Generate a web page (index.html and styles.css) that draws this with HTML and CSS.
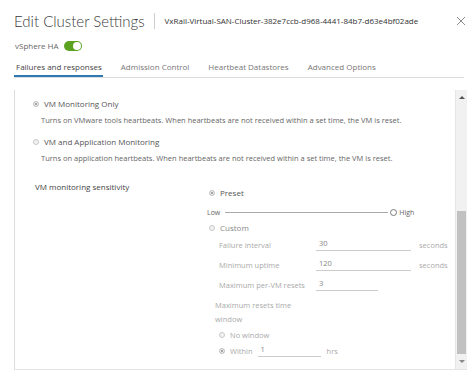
FILE: index.html
```html
<!DOCTYPE html>
<html lang="en">

<head>
  <meta charset="UTF-8">
  <meta name="viewport" content="width=device-width, initial-scale=1.0">
  <title>Edit Cluster Settings</title>
  <link rel="stylesheet" href="styles.css">
</head>

<body>
  <div class="dialog">
    <div class="header">
      <h1 class="title">Edit Cluster Settings</h1>
      <span class="subtitle">VxRail-Virtual-SAN-Cluster-382e7ccb-d968-4441-84b7-d63e4bf02ade</span>
      <span class="close">
        <svg width="10" height="10" viewBox="0 0 10 10">
          <path d="M1 1L9 9M9 1L1 9" stroke="#8a8a8a" stroke-width="1" fill="none" />
        </svg>
      </span>
    </div>

    <div class="ha">
      <span>vSphere HA</span>
      <span class="toggle"><span class="knob"></span></span>
    </div>

    <ul class="tabs">
      <li class="tab active">Failures and responses</li>
      <li class="tab">Admission Control</li>
      <li class="tab">Heartbeat Datastores</li>
      <li class="tab">Advanced Options</li>
    </ul>

    <div class="panel">
      <div class="content">
        <div class="option">
          <div class="radio-row"><span class="radio checked"></span>VM Monitoring Only</div>
          <p class="desc">Turns on VMware tools heartbeats. When heartbeats are not received within a set time, the VM is reset.</p>
        </div>
        <div class="option">
          <div class="radio-row"><span class="radio"></span>VM and Application Monitoring</div>
          <p class="desc">Turns on application heartbeats. When heartbeats are not received within a set time, the VM is reset.</p>
        </div>

        <div class="sensitivity">
          <div class="sens-label">VM monitoring sensitivity</div>
          <div class="sens-body">
            <div class="radio-row preset"><span class="radio checked"></span>Preset</div>
            <div class="slider">
              <span>Low</span>
              <span class="track"></span>
              <span class="thumb"></span>
              <span>High</span>
            </div>
            <div class="radio-row custom"><span class="radio"></span>Custom</div>

            <div class="fields">
              <div class="field">
                <span class="f-label">Failure interval</span>
                <span class="f-input">30</span>
                <span class="f-unit">seconds</span>
              </div>
              <div class="field">
                <span class="f-label">Minimum uptime</span>
                <span class="f-input">120</span>
                <span class="f-unit">seconds</span>
              </div>
              <div class="field">
                <span class="f-label">Maximum per-VM resets</span>
                <span class="f-input short">3</span>
              </div>
            </div>

            <div class="window-label">Maximum resets time<br>window</div>
            <div class="radio-row dim win"><span class="radio"></span>No window</div>
            <div class="radio-row dim win"><span class="radio checked"></span>Within
              <span class="f-input hrs">1</span>
              <span class="f-unit hrs-unit">hrs</span>
            </div>
          </div>
        </div>
      </div>

      <div class="scrollbar">
        <span class="arrow up"></span>
        <span class="sb-track"><span class="sb-thumb"></span></span>
        <span class="arrow down"></span>
      </div>
    </div>
  </div>
</body>

</html>
```

FILE: styles.css
```css
* {
  box-sizing: border-box;
  list-style: none;
}

body {
  margin: 0;
  background: #fff;
  font-family: "Open Sans", "Noto Sans", sans-serif;
  color: #565656;
}

.dialog {
  width: 474px;
  height: 372px;
  overflow: hidden;
}

/* header */
.header {
  display: flex;
  align-items: center;
  padding: 9px 0 0 14px;
  height: 32px;
}

.title {
  margin: 0;
  font-family: Lato, "Open Sans", sans-serif;
  font-size: 15px;
  font-weight: 300;
  color: #3a3a3a;
  padding-right: 9px;
  border-right: 1px solid #ccc;
  line-height: 16px;
  white-space: nowrap;
}

.subtitle {
  font-size: 8px;
  color: #333;
  margin-left: 10px;
  flex: 1;
  white-space: nowrap;
}

.close {
  display: flex;
  margin-right: 8px;
}

.ha {
  display: flex;
  align-items: center;
  gap: 6px;
  padding: 8px 0 0 15px;
  font-size: 8px;
  color: #666;
}

.toggle {
  width: 18px;
  height: 10px;
  border-radius: 5px;
  background: #5aa220;
  display: flex;
  justify-content: flex-end;
  padding: 1px;
}

.knob {
  width: 8px;
  height: 8px;
  border-radius: 50%;
  background: #fff;
}

/* tabs */
.tabs {
  display: flex;
  gap: 16px;
  margin: 10px 10px 0 14px;
  padding: 0;
  border-bottom: 1px solid #ddd;
}

.tab {
  font-size: 8px;
  color: #777;
  padding: 0 1px 5px 2px;
}

.tab.active {
  color: #444;
  box-shadow: inset 0 -2px 0 #2f79b5;
}

/* panel */
.panel {
  display: flex;
  margin: 12px 7px 0 14px;
  height: 280px;
  border-left: 1px solid #ddd;
  border-bottom: 1px solid #e4e4e4;
}

.content {
  flex: 1;
  padding: 8px 0 0 18px;
  font-size: 8px;
}

.option {
  margin-bottom: 11px;
}

.radio-row {
  display: flex;
  align-items: center;
  gap: 5px;
  color: #555;
}

.radio {
  width: 6px;
  height: 6px;
  border-radius: 50%;
  border: 1px solid #c8c8c8;
  background: #f2f2f2;
}

.radio.checked {
  background: #888;
  border-color: #ccc;
  box-shadow: inset 0 0 0 1px #fff;
}

.desc {
  margin: 6px 0 0 8px;
  font-size: 7.5px;
  color: #666;
}

/* sensitivity */
.sensitivity {
  display: grid;
  grid-template-columns: 172px 1fr;
  margin-top: 18px;
  margin-left: 2px;
}

.sens-label {
  color: #444;
}

.sens-body {
  display: flex;
  flex-direction: column;
  padding-top: 6px;
}

.preset {
  margin-left: 2px;
}

.slider {
  display: flex;
  align-items: center;
  gap: 2px;
  margin-top: 10px;
  font-size: 7px;
  color: #666;
}

.track {
  width: 163px;
  height: 1px;
  background: #aaa;
  margin-left: 3px;
}

.thumb {
  width: 7px;
  height: 7px;
  border-radius: 50%;
  border: 1px solid #777;
  background: #fff;
}

.custom {
  margin: 5px 0 0 2px;
  color: #888;
}

.fields {
  display: flex;
  flex-direction: column;
  gap: 7px;
  margin: 5px 0 0 12px;
}

.field {
  display: flex;
  align-items: center;
  font-size: 7.5px;
  color: #aaa;
}

.f-label {
  width: 97px;
}

.f-input {
  width: 95px;
  border-bottom: 1px solid #ccc;
  padding: 0 0 2px 3px;
  color: #888;
}

.f-input.short {
  width: 62px;
}

.f-unit {
  margin-left: 8px;
  color: #aaa;
}

.window-label {
  margin: 7px 0 0 8px;
  font-size: 7.5px;
  line-height: 14px;
  color: #aaa;
}

.dim {
  color: #aaa;
  font-size: 7.5px;
}

.win {
  margin: 4px 0 0 12px;
}

.f-input.hrs {
  width: 63px;
  margin-left: 0;
}

.f-unit.hrs-unit {
  margin-left: 1px;
}

/* scrollbar */
.scrollbar {
  width: 12px;
  display: flex;
  flex-direction: column;
  align-items: center;
  background: #f1f1f1;
  border-left: 1px solid #e6e6e6;
}

.arrow {
  width: 0;
  height: 0;
  margin: 6px 0;
  border-left: 3px solid transparent;
  border-right: 3px solid transparent;
}

.arrow.up {
  border-bottom: 3px solid #555;
}

.arrow.down {
  border-top: 3px solid #888;
}

.sb-track {
  flex: 1;
  width: 100%;
  display: flex;
  flex-direction: column;
  justify-content: flex-end;
  padding: 0 1px;
}

.sb-thumb {
  height: 143px;
  background: #c1c1c1;
}
```
